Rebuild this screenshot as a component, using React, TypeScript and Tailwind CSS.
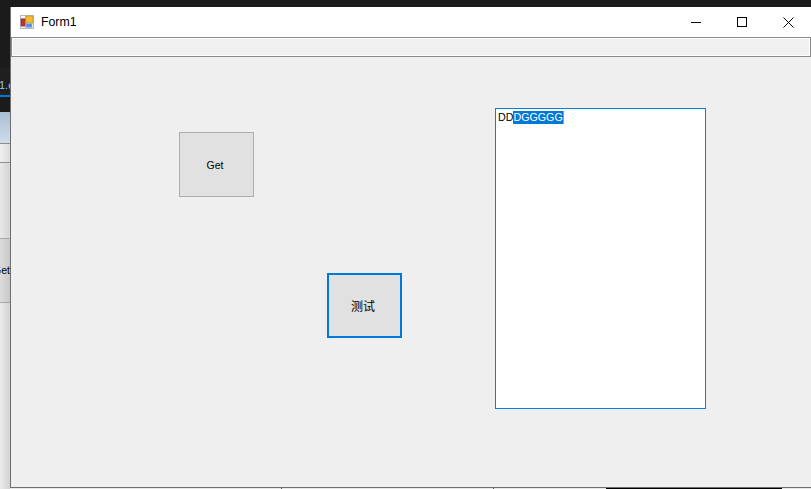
const ui = '"Liberation Sans", "Noto Sans CJK SC", sans-serif';

function AppIcon() {
  return (
    <svg width="14" height="14" viewBox="0 0 14 14" className="shrink-0">
      <rect x="0.5" y="0.5" width="13" height="13" fill="#f6f6f6" stroke="#b9b9b9" />
      <path d="M5.5 0.5 V13.5 M0.5 3.5 H5.5 M0.5 11 H5.5" stroke="#c4c4c4" fill="none" />
      <rect x="6" y="1" width="7" height="7" fill="#f4bc30" stroke="#b5872a" strokeWidth="0.6" />
      <rect x="1" y="4" width="4" height="7" fill="#b8372e" stroke="#8f2a24" strokeWidth="0.6" />
      <rect x="6" y="8.5" width="6" height="4" fill="#5b8fe0" stroke="#8fb4ec" strokeWidth="0.6" />
    </svg>
  );
}

function TitleBar() {
  return (
    <div className="flex h-[30px] items-center bg-white">
      <div className="ml-[9px]">
        <AppIcon />
      </div>
      <span className="ml-[7px] text-[12.3px] text-black" style={{ fontFamily: ui }}>Form1</span>
      <div className="ml-auto flex h-full items-center">
        <div className="flex w-[46px] items-center justify-center">
          <div className="h-px w-[10px] bg-black" />
        </div>
        <div className="flex w-[46px] items-center justify-center">
          <div className="h-[10px] w-[10px] border border-black" />
        </div>
        <div className="flex w-[46px] items-center justify-center">
          <svg width="11" height="11" viewBox="0 0 11 11">
            <path d="M0.5 0.5 L10.5 10.5 M10.5 0.5 L0.5 10.5" stroke="#000" strokeWidth="1" fill="none" />
          </svg>
        </div>
      </div>
    </div>
  );
}

function LeftStrip() {
  return (
    <div className="flex w-[10px] shrink-0 flex-col" style={{ fontFamily: ui }}>
      <div className="h-[68px] bg-[#1b1b1b]" />
      <div className="h-[27px] overflow-hidden bg-[#1f1f1f] pt-[10px] text-[11px] leading-[15px] whitespace-nowrap text-[#9fc4e8]">
        <span className="-ml-[1px] inline-block">1.c</span>
      </div>
      <div className="h-[2px] bg-[#0078d7]" />
      <div className="h-[15px] bg-[#1b1b1b]" />
      <div className="h-[31px] bg-gradient-to-b from-[#a9bfd4] to-[#cfdcea]" />
      <div className="h-px bg-[#8e8e8e]" />
      <div className="h-[18px] bg-gradient-to-r from-[#f0f0f0] to-[#dcdcdc]" />
      <div className="h-px bg-[#8e8e8e]" />
      <div className="h-[75px] bg-gradient-to-r from-[#e8e8e8] to-[#d4d4d4]" />
      <div className="h-px bg-[#a8a8a8]" />
      <div className="flex h-[63px] items-center justify-end overflow-hidden bg-gradient-to-r from-[#dcdcdc] to-[#c8c8c8] text-[10.5px] text-black">
        <span className="shrink-0">Get</span>
      </div>
      <div className="h-px bg-[#a8a8a8]" />
      <div className="flex-1 bg-gradient-to-r from-[#ececec] to-[#d2d2d2]" />
    </div>
  );
}

export default function App() {
  return (
    <div className="flex h-[489px] w-[811px] flex-col overflow-hidden bg-[#1b1b1b]">
      <div className="flex h-full">
        <LeftStrip />
        <div className="flex flex-1 flex-col pt-[7px]">
          <div className="flex h-[481px] flex-col border-b border-l border-[#6f6f6f] bg-[#efefef]">
            <TitleBar />
            <div className="h-[20px] border border-[#8a8a8a] bg-[#f0f0f0] shadow-[inset_0_0_0_1px_#ffffff]" />
            <div className="flex flex-1 items-start text-[10.5px] text-black" style={{ fontFamily: ui }}>
              <button className="mt-[75px] ml-[168px] flex h-[65px] w-[75px] items-center justify-center border border-[#adadad] bg-[#e1e1e1] pt-[2px]">
                <span className="-ml-[3px]">Get</span>
              </button>
              <button className="mt-[216px] ml-[73px] flex h-[65px] w-[75px] items-center justify-center border-2 border-[#0078d7] bg-[#e1e1e1] pt-[2px]">
                <span className="-ml-[3px] text-[12px]">测试</span>
              </button>
              <div className="mt-[51px] ml-[93px] h-[301px] w-[211px] border border-[#0a7fdc] bg-white pt-[2px] pl-[2px] text-[10.7px] leading-[13px]">
                DD<span className="inline-block border-r border-[#e08a2a] bg-[#0078d7] text-white">DGGGGG</span>
              </div>
            </div>
          </div>
          <div className="flex h-px bg-[#e8e8e8]">
            <div className="ml-[271px] h-px w-px bg-[#555555]" />
            <div className="ml-[211px] h-px w-px bg-[#555555]" />
            <div className="ml-[112px] h-px w-[176px] bg-black" />
          </div>
        </div>
      </div>
    </div>
  );
}
